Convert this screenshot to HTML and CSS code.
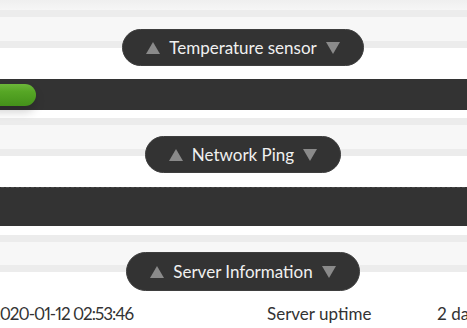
FILE: index.html
```html
<!DOCTYPE html>
<html>
<head>
<meta charset="utf-8">
<link rel="stylesheet" href="styles.css">
</head>
<body>
<div class="page">
  <div class="top-fill"></div>

  <section class="section s1">
    <div class="strip">
      <div class="pill">
        <span class="tri up"></span>
        <span class="pill-label">Temperature sensor</span>
        <span class="tri down"></span>
      </div>
    </div>
    <div class="gap"></div>
    <div class="dark dark1">
      <div class="green"></div>
    </div>
  </section>

  <section class="section s2">
    <div class="strip">
      <div class="pill">
        <span class="tri up"></span>
        <span class="pill-label">Network Ping</span>
        <span class="tri down"></span>
      </div>
    </div>
    <div class="gap"></div>
    <div class="dark dark2"></div>
  </section>

  <section class="section s3">
    <div class="strip">
      <div class="pill">
        <span class="tri up"></span>
        <span class="pill-label">Server Information</span>
        <span class="tri down"></span>
      </div>
    </div>
    <div class="info-row">
      <span class="cell date">2020-01-12 02:53:46</span>
      <span class="cell">Server uptime</span>
      <span class="cell">2 days, 4 hours</span>
    </div>
  </section>
</div>
</body>
</html>
```

FILE: styles.css
```css
html, body {
  margin: 0;
  padding: 0;
  background: #ffffff;
  overflow: hidden;
}

.page {
  width: 504px;
  height: 328px;
  margin-left: -9px;
  overflow: hidden;
  font-family: "Lato", "Open Sans", sans-serif;
}

.top-fill {
  height: 10px;
  background: linear-gradient(#efefef, #f6f6f6);
}

.strip {
  height: 24px;
  background: #f7f7f7;
  border-top: 7px solid #ececec;
  border-bottom: 7px solid #ececec;
  display: flex;
  justify-content: center;
  align-items: flex-start;
}

.s3 .strip {
  height: 23px;
}

.pill {
  flex: none;
  height: 37px;
  margin-top: 12px;
  padding: 0 23px;
  box-sizing: border-box;
  border-radius: 19px;
  background: #333333;
  border: 1px solid #3e3e3e;
  display: flex;
  align-items: center;
  gap: 9px;
  position: relative;
  z-index: 2;
}

.s2 .pill { margin-top: 11px; }
.s3 .pill { margin-top: 10px; height: 39px; border-radius: 20px; }

.pill-label {
  color: #f0f0f0;
  font-size: 17px;
  line-height: 20px;
  white-space: nowrap;
}

.tri {
  width: 0;
  height: 0;
  border-left: 7px solid transparent;
  border-right: 7px solid transparent;
}

.tri.up {
  border-bottom: 12px solid #8a8a8a;
}

.tri.down {
  border-top: 12px solid #8a8a8a;
}

.gap {
  height: 31px;
}

.dark {
  background: #333333;
}

.dark1 {
  height: 31px;
  display: flex;
  align-items: center;
}

.green {
  width: 45px;
  height: 22px;
  border-radius: 0 11px 11px 0;
  background: linear-gradient(#6db73a 0%, #56a625 35%, #44911a 100%);
  box-shadow: 0 6px 10px rgba(0, 0, 0, 0.18);
}

.s2 {
  margin-top: 8px;
}

.dark2 {
  height: 38px;
  border-top: 1px dashed #4a4a4a;
}

.s3 {
  margin-top: 9px;
}

.info-row {
  display: grid;
  grid-template-columns: 276px 170px auto;
  padding-top: 30px;
  font-size: 17px;
  line-height: 24px;
  color: #333333;
  white-space: nowrap;
}

.date {
  font-variant-numeric: proportional-nums;
  letter-spacing: -1px;
}
```
